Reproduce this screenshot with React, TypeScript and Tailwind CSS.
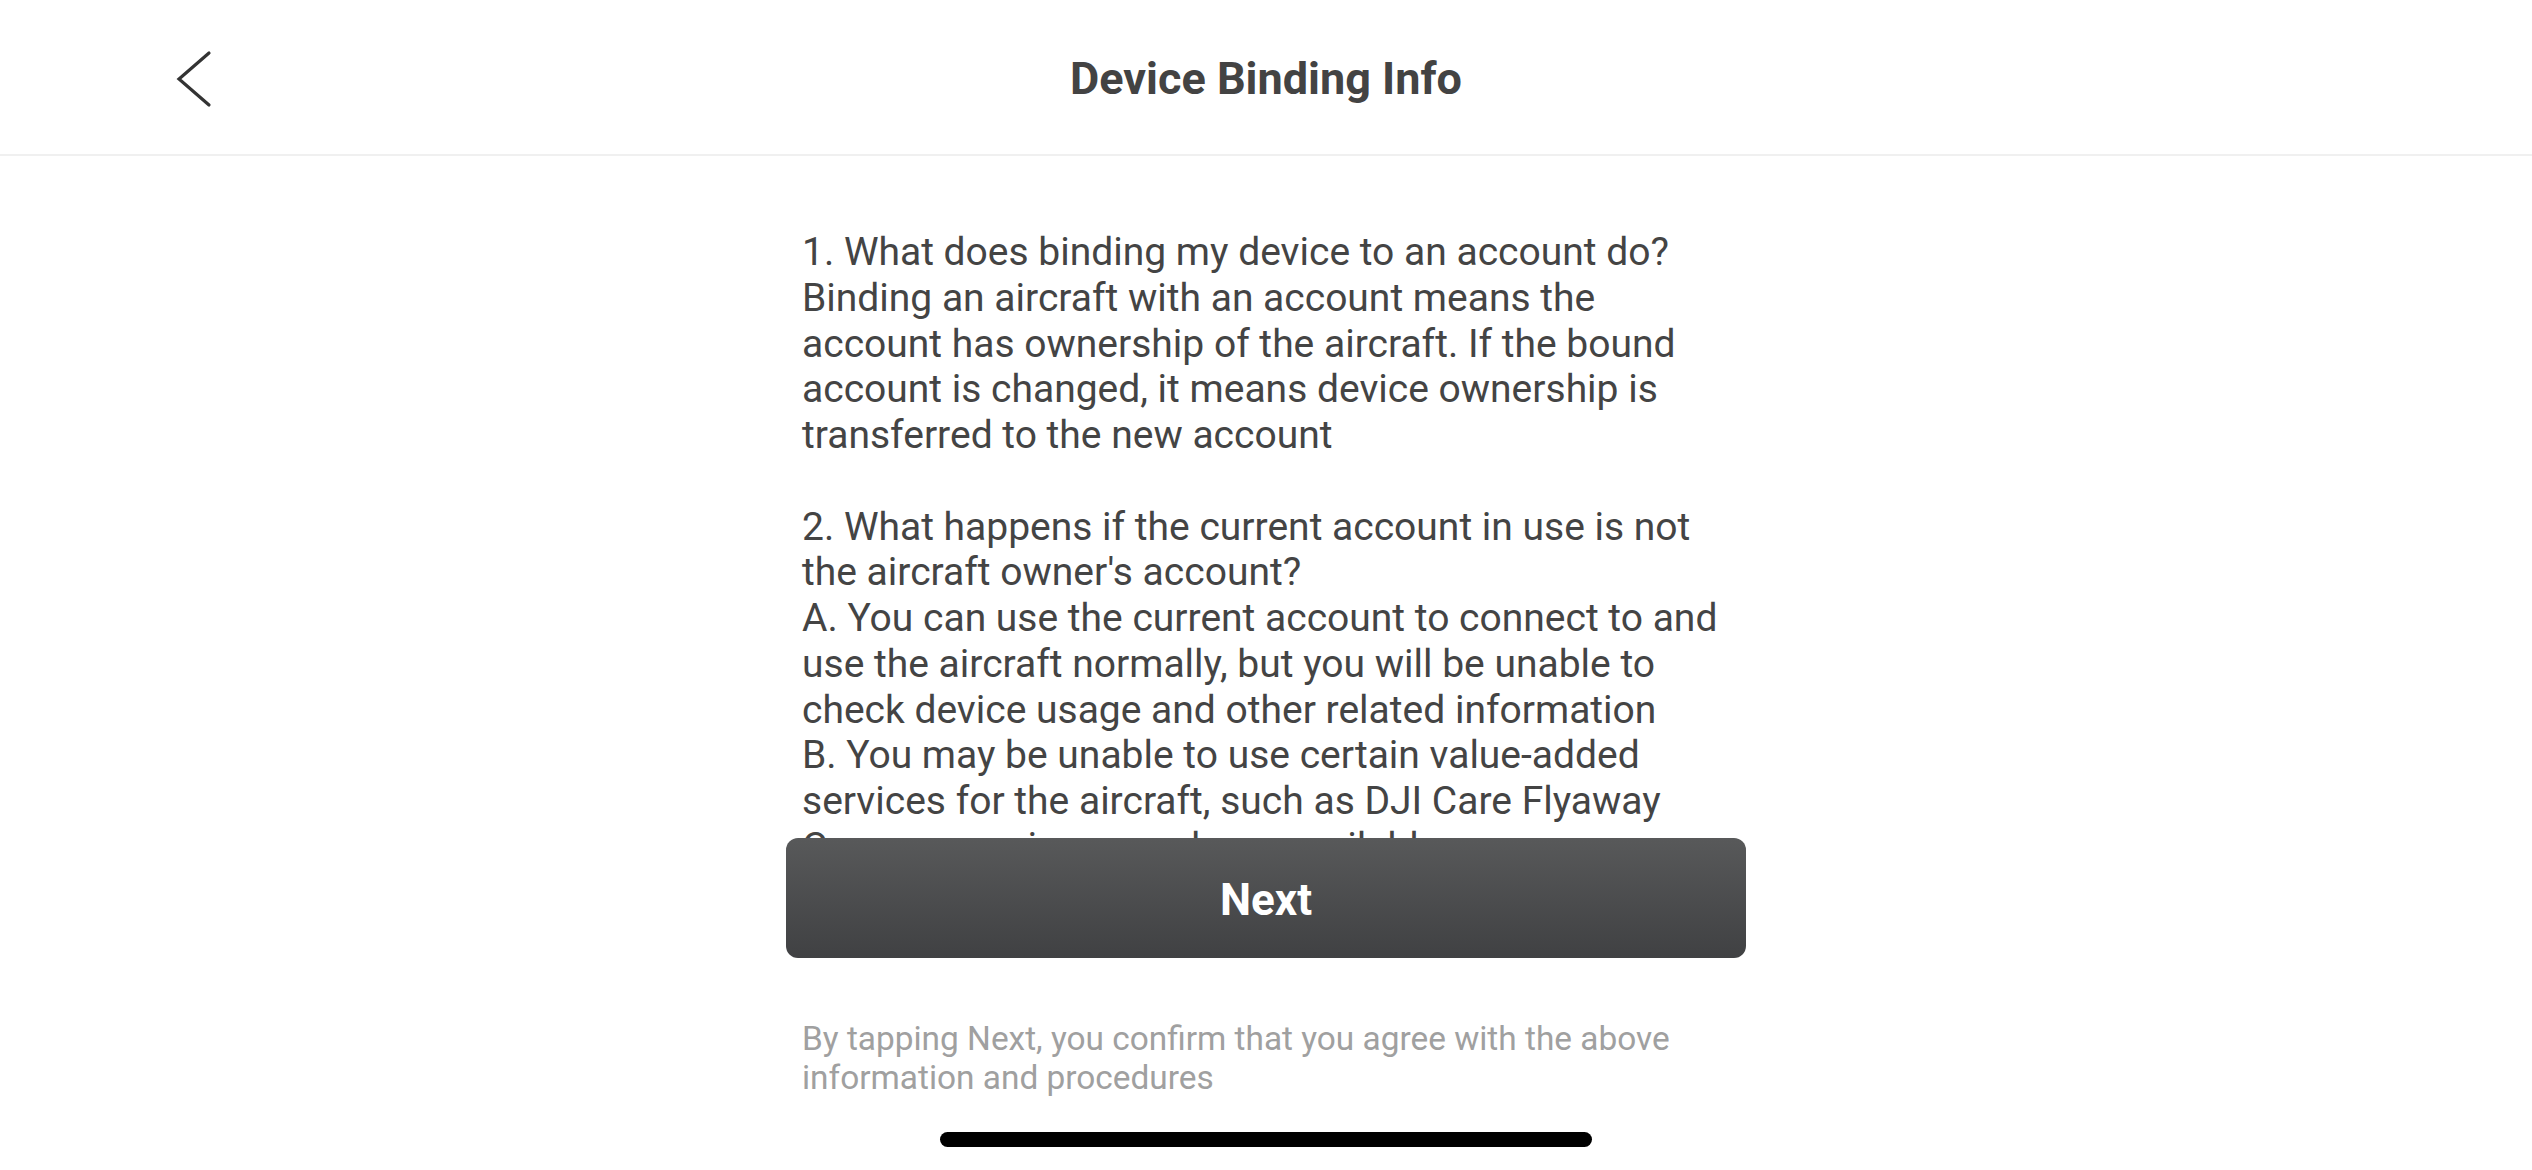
import React from "react";

const font = { fontFamily: 'Roboto, "Noto Sans", sans-serif' };

function BackChevron() {
  return (
    <svg width="40" height="60" viewBox="0 0 40 60" fill="none" className="block">
      <polyline
        points="33,4 3,30 33,56"
        stroke="#333333"
        strokeWidth="3.2"
        strokeLinecap="round"
        strokeLinejoin="miter"
      />
    </svg>
  );
}

export default function App() {
  return (
    <div
      className="w-[2532px] h-[1170px] bg-white flex flex-col overflow-hidden"
      style={font}
    >
      {/* Top bar */}
      <header className="relative h-[156px] shrink-0 border-b-2 border-[#f0f0f0] flex items-center justify-center">
        <button className="absolute left-[176px] top-[49px] p-0">
          <BackChevron />
        </button>
        <h1 className="text-[45px] font-bold text-[#434343] leading-none mt-[3px]">
          Device Binding Info
        </h1>
      </header>

      {/* Scrollable notice */}
      <div className="w-[960px] mx-auto flex-1 min-h-0 overflow-hidden px-[16px] pt-[74px]">
        <div className="text-[39px] leading-[45.75px] text-[#444444] whitespace-pre-line">
          <p>
            1. What does binding my device to an account do?{"\n"}
            Binding an aircraft with an account means the account has ownership of the aircraft. If the bound account is changed, it means device ownership is transferred to the new account
          </p>
          <p className="mt-[45.75px]">
            2. What happens if the current account in use is not the aircraft owner's account?{"\n"}
            A. You can use the current account to connect to and use the aircraft normally, but you will be unable to check device usage and other related information{"\n"}
            B. You may be unable to use certain value-added services for the aircraft, such as DJI Care Flyaway{"\n"}
            C. some services may be unavailable on a non-owner account
          </p>
        </div>
      </div>

      {/* Footer actions */}
      <div className="w-[960px] mx-auto shrink-0 flex flex-col">
        <button className="h-[120px] w-full rounded-[12px] bg-gradient-to-b from-[#58595a] to-[#404143] text-white text-[44px] font-bold pt-[3px]">
          Next
        </button>
        <p className="mt-[61px] px-[16px] text-[33.4px] leading-[39px] text-[#a0a0a0]">
          By tapping Next, you confirm that you agree with the above information and procedures
        </p>
        <div className="mt-[35px] mb-[23px] mx-auto w-[652px] h-[15px] rounded-full bg-black" />
      </div>
    </div>
  );
}
